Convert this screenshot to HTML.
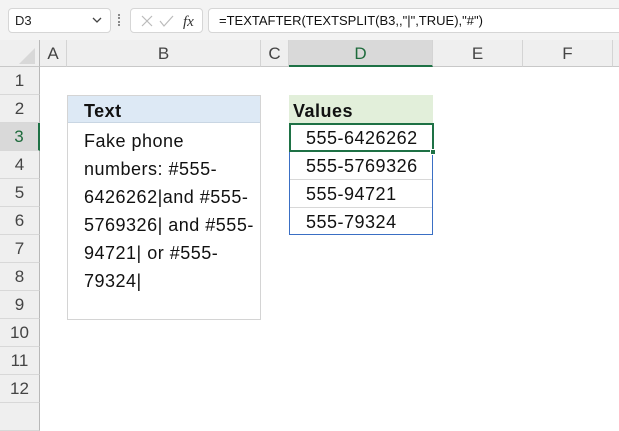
<!DOCTYPE html>
<html><head><style>
*{margin:0;padding:0;box-sizing:border-box}
body{width:619px;height:407px;overflow:hidden;background:#fff;font-family:"Liberation Sans",Arial,sans-serif;position:relative}
.a{position:absolute}
.top{left:0;top:0;width:619px;height:40px;background:#f3f3f3}
.box{background:#fff;border:1px solid #d6d6d6;border-radius:4px}
.ch{top:40px;height:27px;background:#efefef;border-right:1px solid #d4d4d4;border-bottom:1px solid #c8c8c8;color:#444;font-size:17px;text-align:center;line-height:27px}
.rh{left:0;width:40px;height:28px;background:#efefef;border-bottom:1px solid #d8d8d8;border-right:1px solid #b8b8b8;color:#444;font-size:17px;text-align:center;line-height:28px}
.t{font-size:18px;letter-spacing:0.5px;color:#111;white-space:nowrap}
</style></head><body>
<div class="a top"></div>
<div class="a box" style="left:8px;top:8px;width:103px;height:25px"></div>
<div class="a" style="left:15px;top:13px;font-size:13px;color:#222">D3</div>
<svg class="a" style="left:91px;top:15px" width="12" height="10"><path d="M2 3l4 4 4-4" stroke="#444" stroke-width="1.3" fill="none"/></svg>
<div class="a" style="left:118px;top:14px;width:2px;height:12px;border-left:2px dotted #888"></div>
<div class="a box" style="left:130px;top:8px;width:73px;height:25px"></div>
<svg class="a" style="left:138px;top:13px" width="60" height="16"><path d="M4 3l10 10M14 3L4 13" stroke="#bbb" stroke-width="1.2"/><path d="M22 8l4 5 9-10" stroke="#bbb" stroke-width="1.2" fill="none"/><text x="45" y="13" font-family="Liberation Serif" font-style="italic" font-size="15" fill="#333">fx</text></svg>
<div class="a box" style="left:208px;top:8px;width:420px;height:25px"></div>
<div class="a" style="left:219px;top:13px;font-size:13px;color:#111">=TEXTAFTER(TEXTSPLIT(B3,,"|",TRUE),"#")</div>

<div class="a ch" style="left:0;width:40px;border-right:1px solid #b8b8b8"><svg width="38" height="27" style="position:absolute;left:0;top:0"><path d="M35 8v16H19z" fill="#d8d8d8"/></svg></div>
<div class="a ch" style="left:40px;width:27px">A</div>
<div class="a ch" style="left:67px;width:194px">B</div>
<div class="a ch" style="left:261px;width:28px">C</div>
<div class="a ch" style="left:289px;width:144px;background:#d9d9d9;color:#1e6b3c;border-bottom:2px solid #1e7145">D</div>
<div class="a ch" style="left:433px;width:90px">E</div>
<div class="a ch" style="left:523px;width:90px">F</div>
<div class="a ch" style="left:613px;width:10px"></div>

<div class="a rh" style="top:67px">1</div>
<div class="a rh" style="top:95px">2</div>
<div class="a rh" style="top:123px;background:#d9d9d9;color:#1e6b3c;border-right:2px solid #1e7145">3</div>
<div class="a rh" style="top:151px">4</div>
<div class="a rh" style="top:179px">5</div>
<div class="a rh" style="top:207px">6</div>
<div class="a rh" style="top:235px">7</div>
<div class="a rh" style="top:263px">8</div>
<div class="a rh" style="top:291px">9</div>
<div class="a rh" style="top:319px">10</div>
<div class="a rh" style="top:347px">11</div>
<div class="a rh" style="top:375px">12</div>
<div class="a rh" style="top:403px"></div>

<div class="a" style="left:67px;top:95px;width:194px;height:225px;border:1px solid #d4d4d4"></div>
<div class="a" style="left:68px;top:96px;width:192px;height:27px;background:#dde9f5;border-bottom:1px solid #c9d6e3"></div>
<div class="a t" style="left:84px;top:101px;font-weight:bold">Text</div>
<div class="a" style="left:68px;top:124px;width:192px;height:170px;overflow:hidden">
<div class="a t" style="left:16px;top:3px;line-height:28px">Fake phone<br>numbers: #555-<br>6426262|and #555-<br>5769326| and #555-<br>94721| or #555-<br>79324|</div></div>

<div class="a" style="left:289px;top:95px;width:144px;height:28px;background:#e2efda"></div>
<div class="a t" style="left:293px;top:101px;font-weight:bold">Values</div>
<div class="a" style="left:289px;top:123px;width:144px;height:112px;border:1px solid #3a6fc4"></div>
<div class="a" style="left:290px;top:179px;width:142px;border-top:1px solid #d8d8d8"></div>
<div class="a" style="left:290px;top:207px;width:142px;border-top:1px solid #d8d8d8"></div>
<div class="a" style="left:289px;top:123px;width:145px;height:29px;border:2px solid #1e7145"></div>
<div class="a" style="left:430px;top:149px;width:6px;height:6px;background:#1e7145;border:1px solid #fff"></div>
<div class="a t" style="left:306px;top:128px">555-6426262</div>
<div class="a t" style="left:306px;top:156px">555-5769326</div>
<div class="a t" style="left:306px;top:184px">555-94721</div>
<div class="a t" style="left:306px;top:212px">555-79324</div>
</body></html>
